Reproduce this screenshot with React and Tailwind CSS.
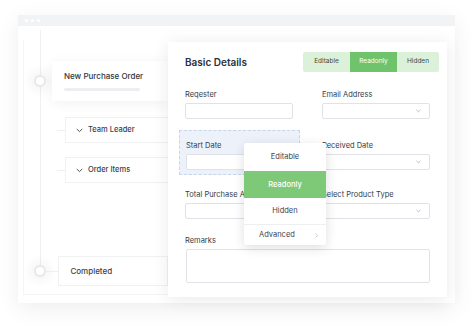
import React from 'react';

const font = { fontFamily: 'Inter, "Noto Sans", sans-serif' };

const Chevron = ({ className = '' }) => (
    <svg viewBox="0 0 10 6" className={className} fill="none" stroke="currentColor" strokeWidth="1.4" strokeLinecap="round" strokeLinejoin="round">
        <path d="M1.5 1.2 5 4.6 8.5 1.2" />
    </svg>
);

const Dot = () => (
    <div className="w-[12px] h-[12px] rounded-full bg-white border-[2px] border-[#e6e8eb] shadow-[0_0_8px_5px_rgba(0,0,0,0.04)]" />
);

const Field = ({ label, select, className = '' }) => (
    <div className={className}>
        <div className="text-[7.5px] text-[#353c46] leading-[10px] pt-px">{label}</div>
        <div className="mt-[3px] w-[108px] h-[16px] border border-[#dfe3e8] bg-white rounded-[2px] flex items-center justify-end pr-[8px]">
            {select && <Chevron className="w-[5px] h-[4px] text-[#9aa1ab]" />}
        </div>
    </div>
);

const Branch = ({ label }) => (
    <div className="flex items-center">
        <div className="w-[8px] h-px bg-[#eceef1]" />
        <div className="w-[130px] h-[26px] border border-[#f0f1f3] bg-white flex items-center pl-[10px] gap-[5px]">
            <Chevron className="w-[7px] h-[5px] text-[#4b525c]" />
            <span className="text-[7.5px] font-medium text-[#3a414b]">{label}</span>
        </div>
    </div>
);

const App = () => {
    return (
        <div className="w-[474px] h-[326px] bg-white overflow-hidden pt-[15px] pl-[18px]" style={font}>
            <div className="w-[437px] h-[288px] bg-white shadow-[0_6px_22px_rgba(0,0,0,0.07)]">
                <div className="h-[11px] bg-[#f2f3f5] flex items-center gap-[3px] pl-[7px]">
                    <span className="w-[3px] h-[3px] rounded-full bg-white" />
                    <span className="w-[3px] h-[3px] rounded-full bg-white" />
                    <span className="w-[3px] h-[3px] rounded-full bg-white" />
                </div>
                <div className="relative flex h-[277px]">
                    {/* timeline */}
                    <div className="absolute left-[22px] top-[4px] w-px h-[245px] bg-[#eef0f2]" />
                    <div className="absolute left-[5px] top-[14px] w-[145px] h-[255px] border-l border-b border-[#f4f5f6]" />

                    <div className="relative w-[150px] shrink-0 pt-[35px]">
                        <div className="flex items-center">
                            <div className="ml-[16px] mr-[6px]"><Dot /></div>
                            <div className="w-[130px] h-[40px] bg-white shadow-[0_2px_12px_rgba(0,0,0,0.06)] pl-[12px] pt-[9px]">
                                <div className="text-[8px] font-medium text-[#2f3640] leading-[12px]">New Purchase Order</div>
                                <div className="mt-[6px] w-[76px] h-[3px] rounded-full bg-[#eceef1]" />
                            </div>
                        </div>
                        <div className="ml-[39px] flex">
                            <div className="w-px h-[70px] bg-[#eceef1]" />
                            <div className="flex flex-col gap-[14px] pt-[16px]">
                                <Branch label="Team Leader" />
                                <Branch label="Order Items" />
                            </div>
                        </div>
                        <div className="mt-[73px] flex items-center">
                            <div className="ml-[16px]"><Dot /></div>
                            <div className="h-px w-[15px] bg-[#eceef1]" />
                            <div className="w-[130px] h-[30px] border border-[#f0f1f3] bg-white flex items-center pl-[11px]">
                                <span className="text-[8px] font-medium text-[#3a414b]">Completed</span>
                            </div>
                        </div>
                    </div>

                    {/* main card */}
                    <div className="relative z-10 mt-[16px] w-[279px] h-[255px] bg-white shadow-[0_2px_16px_rgba(0,0,0,0.09)]">
                        <div className="flex items-center justify-between pt-[10px] pl-[17px] pr-[8px]">
                            <h2 className="text-[10px] font-semibold text-[#2b323c]">Basic Details</h2>
                            <div className="flex h-[20px] rounded-[2px] overflow-hidden text-[6.5px]">
                                <div className="w-[47px] bg-[#dcf1d9] text-[#3f4a42] flex items-center justify-center">Editable</div>
                                <div className="w-[47px] bg-[#6fc36b] text-white flex items-center justify-center">Readonly</div>
                                <div className="w-[42px] bg-[#dcf1d9] text-[#3f4a42] flex items-center justify-center">Hidden</div>
                            </div>
                        </div>

                        <div className="grid grid-cols-[137px_108px] pl-[17px] mt-[17px] gap-y-[19px]">
                            <Field label="Reqester" className="pb-[2px]" />
                            <Field label="Email Address" select className="pb-[2px]" />
                            <div className="-ml-[6px] -mt-[10px] -mb-[5px] pl-[7px] pt-[9px] pb-[4px] w-[121px] border border-dashed border-[#c6d5ec] bg-[#edf2fa]">
                                <Field label="Start Date" className="-ml-[1px]" />
                            </div>
                            <Field label="Received Date" select />
                            <Field label="Total Purchase Amount" />
                            <Field label="Select Product Type" select />
                        </div>

                        <div className="pl-[17px] mt-[16px]">
                            <div className="text-[7.5px] text-[#353c46] leading-[10px] pt-px">Remarks</div>
                            <div className="mt-[3px] ml-px w-[244px] h-[34px] border border-[#dfe3e8] rounded-[2px]" />
                        </div>

                        {/* popover */}
                        <div className="absolute left-[76px] top-[101px] w-[82px] bg-white shadow-[0_3px_12px_rgba(0,0,0,0.13)] rounded-[2px] text-[7.5px] text-[#3c434d]">
                            <div className="h-[28px] flex items-center justify-center">Editable</div>
                            <div className="h-[27px] bg-[#7dc978] text-white font-medium flex items-center justify-center">Readonly</div>
                            <div className="h-[26px] flex items-center justify-center">Hidden</div>
                            <div className="h-[21px] border-t border-[#eceef1] flex items-center pl-[15px] relative">
                                Advanced
                                <svg viewBox="0 0 6 10" className="absolute right-[8px] w-[3px] h-[5px] text-[#b4bac2]" fill="none" stroke="currentColor" strokeWidth="1.4">
                                    <path d="M1 1l4 4-4 4" />
                                </svg>
                            </div>
                        </div>
                    </div>
                </div>
            </div>
        </div>
    );
};

export default App;
